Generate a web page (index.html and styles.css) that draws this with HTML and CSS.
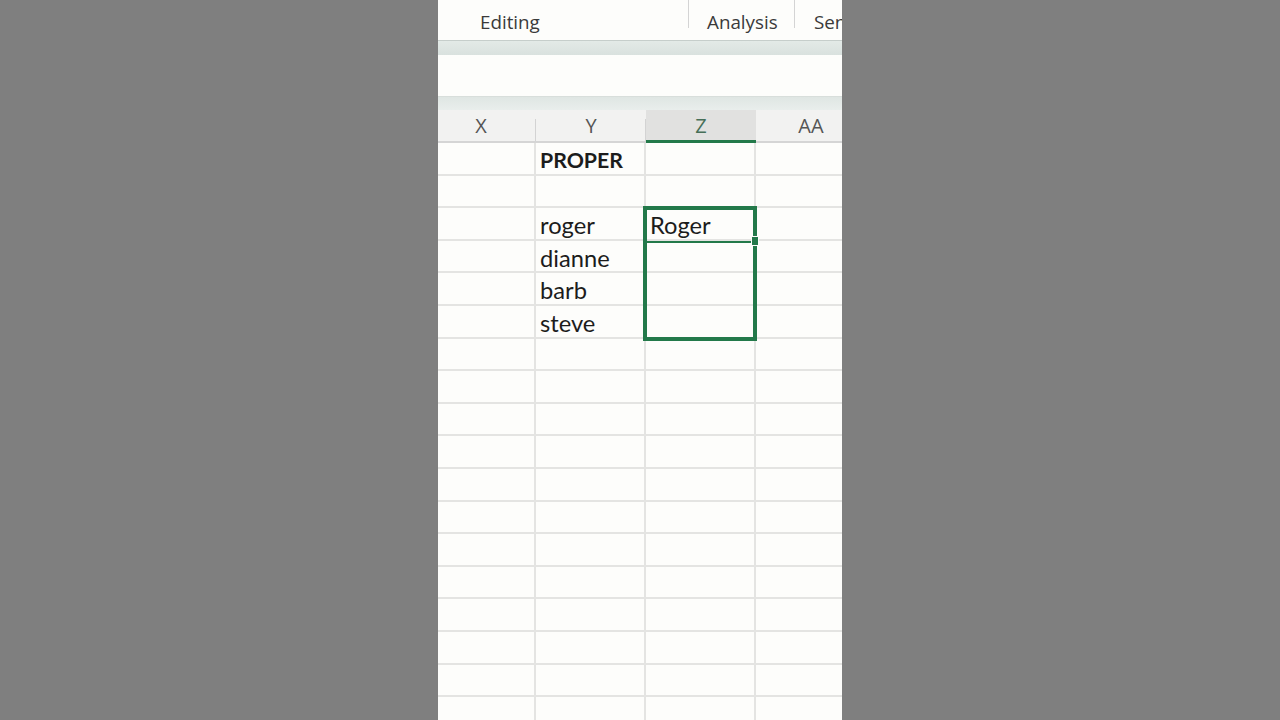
FILE: index.html
```html
<!DOCTYPE html>
<html lang="en">
<head>
    <meta charset="UTF-8">
    <title>PROPER</title>
    <link rel="stylesheet" href="styles.css">
</head>
<body>
    <div class="panel">
        <div class="ribbon">
            <div class="group group-editing">Editing</div>
            <div class="group group-analysis">Analysis</div>
            <div class="group group-sens">Sensitivity</div>
        </div>
        <div class="ribbon-edge"></div>
        <div class="formula-bar"></div>
        <div class="sheet-gap"></div>

        <div class="col-headers">
            <div class="col-head">X</div>
            <div class="col-head">Y</div>
            <div class="col-head active">Z</div>
            <div class="col-head">AA</div>
        </div>

        <div class="sheet">
            <div class="grid" id="grid"></div>
            <div class="selection">
                <div class="active-cell"></div>
                <div class="fill-handle"></div>
            </div>
        </div>
    </div>

    <script>
        // rows of the sheet: [X, Y, Z, AA]
        const rows = [
            ['', 'PROPER', '', ''],
            ['', '', '', ''],
            ['', 'roger', 'Roger', ''],
            ['', 'dianne', '', ''],
            ['', 'barb', '', ''],
            ['', 'steve', '', '']
        ];
        while (rows.length < 18) rows.push(['', '', '', '']);

        const grid = document.getElementById('grid');
        rows.forEach((row, r) => {
            row.forEach(text => {
                const cell = document.createElement('div');
                cell.className = 'cell';
                if (r === 0 && text) cell.classList.add('bold');
                cell.textContent = text;
                grid.appendChild(cell);
            });
        });
    </script>
</body>
</html>
```

FILE: styles.css
```css
body {
    margin: 0;
    background-color: #7f7f7f;
    display: flex;
    justify-content: center;
    height: 720px;
    overflow: hidden;
}
.panel {
    width: 404px;
    height: 720px;
    flex-shrink: 0;
    background-color: #fdfdfb;
    overflow: hidden;
    display: flex;
    flex-direction: column;
}
.panel > div {
    flex-shrink: 0;
}
.ribbon {
    height: 40px;
    display: flex;
    font-family: "Open Sans", sans-serif;
    font-size: 18.8px;
    color: #3a3a3a;
    white-space: nowrap;
}
.group {
    flex-shrink: 0;
    height: 28px;
    box-sizing: border-box;
    line-height: 44px;
}
.group-editing {
    width: 251px;
    padding-left: 42px;
    border-right: 1px solid #d4d4d4;
}
.group-analysis {
    width: 106px;
    padding-left: 18px;
    border-right: 1px solid #d4d4d4;
}
.group-sens {
    padding-left: 19px;
}
.ribbon-edge {
    height: 15px;
    border-top: 1px solid #c6cecb;
    box-sizing: border-box;
    background: linear-gradient(#e3eae7, #d9e1de);
}
.formula-bar {
    height: 41px;
    background-color: #fdfdfb;
}
.sheet-gap {
    height: 14px;
    border-top: 1px solid #d8dedb;
    box-sizing: border-box;
    background: linear-gradient(#dfe6e3, #e9eeec);
}
.col-headers {
    display: grid;
    grid-template-columns: repeat(4, 110px);
    margin-left: -12px;
    height: 33px;
    background-color: #f2f2f1;
    border-bottom: 2px solid #d5d5d5;
    box-sizing: border-box;
    font-family: "Open Sans", sans-serif;
    font-size: 20px;
    color: #555;
}
.col-head {
    display: flex;
    align-items: center;
    justify-content: center;
    background: linear-gradient(#d3d3d3, #d3d3d3) no-repeat right bottom / 1px 22px;
}
.col-head.active {
    background: #e1e1e0;
    color: #466f58;
    border-bottom: 3px solid #23794a;
    margin-bottom: -2px;
}
.sheet {
    position: relative;
    flex: 1;
}
.grid {
    display: grid;
    grid-template-columns: repeat(4, 110px);
    grid-auto-rows: 32.6px;
    margin-left: -12px;
}
.cell {
    border-right: 2px solid #e4e4e2;
    border-bottom: 2px solid #e4e4e2;
    box-sizing: border-box;
    padding: 4px 0 0 4px;
    font-family: Lato, "Open Sans", sans-serif;
    font-size: 23.7px;
    line-height: 26px;
    color: #1c1c1c;
    white-space: nowrap;
    overflow: hidden;
}
.cell.bold {
    font-weight: bold;
    font-size: 21.3px;
}
.selection {
    position: absolute;
    left: 205px;
    top: 63px;
    width: 114px;
    height: 135px;
    border: 4px solid #23794a;
    box-sizing: border-box;
}
.active-cell {
    height: 31px;
    margin-right: 2px;
    border-bottom: 2px solid #23794a;
}
.fill-handle {
    position: absolute;
    right: -6px;
    top: 26px;
    width: 6px;
    height: 8px;
    background-color: #23794a;
    border: 1px solid #fdfdfb;
}
```
